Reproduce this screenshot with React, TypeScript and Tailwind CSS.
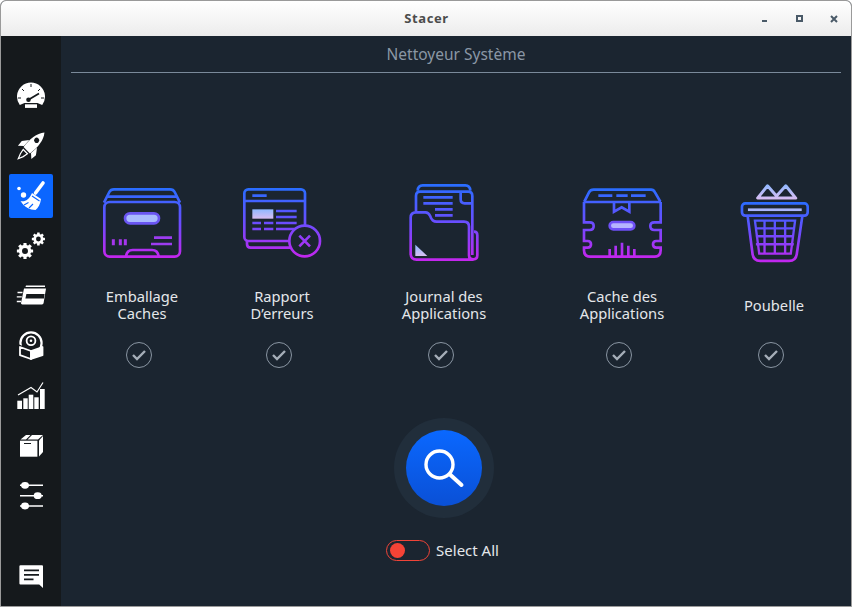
import React from "react";

const DARK = "#15191c";
const BG = "#1b2530";

function Grad({ id, y1, y2 }: { id: string; y1: number; y2: number }) {
  return (
    <linearGradient id={id} gradientUnits="userSpaceOnUse" x1="0" x2="0" y1={y1} y2={y2}>
      <stop offset="0" stopColor="#2a6dff" />
      <stop offset="0.5" stopColor="#6a4dff" />
      <stop offset="1" stopColor="#c426ee" />
    </linearGradient>
  );
}

function Light({ id, y1, y2 }: { id: string; y1: number; y2: number }) {
  return (
    <linearGradient id={id} gradientUnits="userSpaceOnUse" x1="0" x2="0" y1={y1} y2={y2}>
      <stop offset="0" stopColor="#8fb8ff" />
      <stop offset="1" stopColor="#d8bdf2" />
    </linearGradient>
  );
}

function IconCaches() {
  return (
    <svg width="85" height="75" viewBox="30 45 255 225" fill="none" stroke="url(#g1)" strokeWidth="8" strokeLinecap="butt">
      <defs>
        <Grad id="g1" y1={55} y2={262} />
      </defs>
      <path d="M42 98 L58 66 Q62 58 72 58 L240 58 Q250 58 254 66 L270 98" strokeLinejoin="round" />
      <path d="M52 80 L260 80" />
      <rect x="43" y="96" width="227" height="164" rx="16" />
      <rect x="105" y="130" width="102" height="30" rx="15" fill="#a9baff" stroke="#6a55f2" />
      <path d="M70 208 V226 M91 208 V226 M106 208 V226" stroke="#a636ee" strokeWidth="9" />
      <path d="M192 203 H246 M183 222 H246" stroke="#9c3cf0" />
      <path d="M108 260 Q110 240 128 240 L186 240 Q204 240 206 260" />
    </svg>
  );
}

function IconReport() {
  return (
    <svg width="84" height="75" viewBox="450 45 252 225" fill="none" stroke="url(#g2)" strokeWidth="8">
      <defs>
        <Grad id="g2" y1={55} y2={262} />
        <Light id="l2" y1={118} y2={146} />
      </defs>
      <rect x="463" y="58" width="182" height="155" rx="12" />
      <path d="M463 93 H645" />
      <path d="M487 77 H530" />
      <rect x="487" y="118" width="63" height="28" fill="url(#l2)" stroke="none" />
      <path d="M558 123 H620 M558 141 H620 M558 159 H620 M558 177 H620 M487 159 H513 M522 159 H550 M487 177 H513 M522 177 H550" />
      <path d="M471 213 V222 Q471 233 482 233 H610" />
      <circle cx="644" cy="213" r="46" fill={BG} />
      <path d="M628 197 L660 229 M660 197 L628 229" strokeWidth="8" />
    </svg>
  );
}

function IconJournal() {
  return (
    <svg width="80" height="75" viewBox="12 45 240 225" fill="none" stroke="url(#g3)" strokeWidth="8" className="overflow-visible">
      <defs>
        <Grad id="g3" y1={45} y2={272} />
        <Light id="l3" y1={224} y2={258} />
      </defs>
      <path d="M53 62 Q54 46 68 46 H196 Q210 46 211 62" />
      <path d="M48 125 V78 Q48 65 60 65 H205 Q217 65 217 78 V255" />
      <path d="M182 65 V88 Q182 100 194 100 H217" />
      <path d="M70 82 H158 M70 100 H158 M105 118 H158 M105 136 H158" />
      <path d="M32 250 V143 Q32 127 48 127 H76 Q86 127 91 139 Q96 155 110 155 H192 Q207 155 207 170 V256 Q207 268 220 268 Q232 268 232 256 V196 Q232 185 222 185 M32 250 Q32 269 50 269 H220" />
      <path d="M46 224 L82 258 H46 Z" fill="url(#l3)" stroke="none" />
    </svg>
  );
}

function IconAppCache() {
  return (
    <svg width="85" height="75" viewBox="15 30 255 225" fill="none" stroke="url(#g4)" strokeWidth="8">
      <defs>
        <Grad id="g4" y1={40} y2={248} />
      </defs>
      <path d="M28 80 L42 52 Q46 44 56 44 H228 Q236 44 240 52 L256 80" />
      <path d="M26 81 H258" />
      <path d="M70 62 H112 M124 62 H158 M168 62 H212" />
      <path d="M117 82 V110 L140 97 L163 110 V82" />
      <path d="M27 81 V142 H44 Q56 142 56 153 Q56 165 44 165 H27 V198 H38 Q48 198 48 208 Q48 218 38 218 H27 V226 Q27 245 46 245 H238 Q257 245 257 226 V218 H244 Q234 218 234 208 Q234 198 244 198 H257 V165 H238 Q226 165 226 153 Q226 142 238 142 H257 V81" />
      <rect x="104" y="141" width="74" height="22" rx="11" fill="#b6b4ff" stroke="#6f50f7" />
      <path d="M104 222 V245 M122 212 V245 M141 203 V245 M160 212 V245 M178 222 V245" />
    </svg>
  );
}

function IconTrash() {
  const cols = [566, 597, 628];
  const rows = [160, 184, 208];
  return (
    <svg width="83" height="75" viewBox="471 30 250 225" fill="none" stroke="url(#g5)" strokeWidth="8" className="overflow-visible">
      <defs>
        <Grad id="g5" y1={80} y2={262} />
        <Light id="l5" y1={28} y2={72} />
      </defs>
      <path d="M545 69 L575 32 L602 63 L630 32 L660 69 Z" stroke="url(#l5)" strokeWidth="9" strokeLinejoin="round" />
      <rect x="498" y="85" width="198" height="37" rx="10" />
      <rect x="516" y="100" width="162" height="8" fill="#a9b5fa" stroke="none" />
      <path d="M515 122 L530 238 Q533 258 553 258 H640 Q660 258 663 238 L680 122" />
      <path d="M537 137 H658 L645 236 H550 Z" strokeWidth="7" />
      {rows.map((y) => (
        <path key={y} d={`M540 ${y} H654`} strokeWidth="7" />
      ))}
      {cols.map((x) => (
        <path key={x} d={`M${x} 137 V236`} strokeWidth="7" />
      ))}
    </svg>
  );
}

function SideSvg({ children }: { children: React.ReactNode }) {
  return (
    <svg width="32" height="32" viewBox="0 0 32 32" fill="none">
      {children}
    </svg>
  );
}

function Gauge() {
  return (
    <SideSvg>
      <path d="M4.8 25 A14 14 0 1 1 27.2 25 L22.5 23 L9.5 23 Z" fill="white" />
      <rect x="10" y="24.3" width="12" height="3.6" fill="white" />
      <path d="M13 20 L24 13.5" stroke={DARK} strokeWidth="1.8" />
      <circle cx="13.5" cy="19.8" r="2.3" fill={DARK} />
      <path d="M16 4 V7 M7 9 L9 11 M25 9 L23 11 M3 18 H6 M26 18 H29" stroke={DARK} strokeWidth="1" />
    </SideSvg>
  );
}

function Rocket() {
  return (
    <SideSvg>
      <g transform="rotate(45 16 16)">
        <path d="M16 -3 C21 3 22 12 20.5 22 H11.5 C10 12 11 3 16 -3Z" fill="white" />
        <circle cx="16" cy="8" r="2.6" fill={DARK} />
        <path d="M10.5 13 L6 19 L6.5 25 L11 21Z M21.5 13 L26 19 L25.5 25 L21 21Z" fill="white" />
        <path d="M13 24 H19 L18 29 L16 34 L14 29 Z" stroke="white" strokeWidth="1.2" />
      </g>
    </SideSvg>
  );
}

function Broom() {
  return (
    <SideSvg>
      <path d="M28 3 L20.5 13" stroke="white" strokeWidth="3.6" strokeLinecap="round" />
      <path d="M17 13 L26 19 C25.5 24 23 28 20.5 30 C15 30 9 27 5.5 21 C10 22 14 20 17 13Z" fill="white" />
      <path d="M17 16 L24.5 21 M9 25 L13.5 22.5 M14 28 L18 24" stroke="#0b66ff" strokeWidth="1.1" />
      <circle cx="4" cy="8.5" r="1.8" fill="white" />
      <circle cx="8.5" cy="15" r="2.7" fill="white" />
    </SideSvg>
  );
}

function GearShape({ cx, cy, r, tooth }: { cx: number; cy: number; r: number; tooth: number }) {
  const a = [0, 45, 90, 135, 180, 225, 270, 315];
  return (
    <g>
      {a.map((d) => (
        <rect key={d} x={cx - tooth / 2} y={cy - r - tooth * 0.6} width={tooth} height={tooth} rx="0.4" fill="white" transform={`rotate(${d} ${cx} ${cy})`} />
      ))}
      <circle cx={cx} cy={cy} r={r} fill="white" />
      <circle cx={cx} cy={cy} r={r * 0.48} fill={DARK} />
    </g>
  );
}

function Gears() {
  return (
    <SideSvg>
      <GearShape cx={10} cy={21} r={6.2} tooth={3.2} />
      <GearShape cx={23.4} cy={9} r={5} tooth={2.6} />
    </SideSvg>
  );
}

function Startup() {
  return (
    <SideSvg>
      <path d="M11 5.5 L30 5.5 L30 7 L10.5 7Z" fill="white" />
      <path d="M9 8.5 L31 8.5 L28.6 23 Q28.4 24.4 27 24.4 L7.4 24.4 Q5.8 24.4 6 23Z" fill="white" />
      <path d="M11.4 14 L29.6 14 L29 18.4 L10.4 18.4Z" fill={DARK} />
      <path d="M2.5 12.5 H7.5 M1.8 16.8 H6.8 M1.8 21.5 H6" stroke="white" strokeWidth="1.3" />
    </SideSvg>
  );
}

function Disc() {
  return (
    <SideSvg>
      <circle cx="16" cy="13" r="10.6" stroke="white" strokeWidth="2.2" />
      <circle cx="16" cy="10.7" r="4.4" stroke="white" strokeWidth="1.8" />
      <circle cx="16" cy="10.7" r="1.3" fill="white" />
      <path d="M4 16.5 L16 21 V29.8 L4 25.8Z" stroke={DARK} strokeWidth="3.5" fill={DARK} />
      <path d="M5 17 L16 21 V29 L5 25.2Z" stroke="white" strokeWidth="1.8" strokeLinejoin="round" fill={DARK} />
      <path d="M16 21 L27.5 17 V25.2 L16 29Z" fill="white" stroke="white" strokeWidth="1.8" strokeLinejoin="round" />
    </SideSvg>
  );
}

function Chart() {
  return (
    <SideSvg>
      <rect x="2.3" y="20.7" width="4.7" height="8.3" fill="white" />
      <rect x="8.3" y="18.3" width="4.4" height="10.7" fill="white" />
      <rect x="13.7" y="14.7" width="4.6" height="14.3" fill="white" />
      <rect x="19.3" y="17.3" width="4.4" height="11.7" fill="white" />
      <rect x="25" y="9" width="4.7" height="20" fill="white" />
      <path d="M3 15 L16 7.5 L22 12 L28 2.5" stroke="white" strokeWidth="1.2" />
    </SideSvg>
  );
}

function Box() {
  return (
    <SideSvg>
      <rect x="5" y="10.7" width="17.4" height="16" fill="white" />
      <path d="M5.5 9.5 L11 5 H15.5 L11 9.5Z M12.5 9.5 L17 5 H28 L23 9.5Z" fill="white" />
      <path d="M24 10.5 L28 6 V22 L24 26.6Z" fill="white" />
      <path d="M9 13.5 H16" stroke={DARK} strokeWidth="1" />
    </SideSvg>
  );
}

function Sliders() {
  return (
    <SideSvg>
      <path d="M5 5.3 H28 M5 15.7 H28 M5 26 H28" stroke="white" strokeWidth="1.6" />
      <ellipse cx="10" cy="5.3" rx="4" ry="3.4" fill="white" />
      <ellipse cx="22.7" cy="15.7" rx="4" ry="3.4" fill="white" />
      <ellipse cx="10" cy="26" rx="4" ry="3.4" fill="white" />
    </SideSvg>
  );
}

function Chat() {
  return (
    <SideSvg>
      <path d="M5.5 5.3 H27 Q28 5.3 28 6.3 V28 L24.2 24.4 H5.5 Q4.4 24.4 4.4 23.4 V6.3 Q4.4 5.3 5.5 5.3Z" fill="white" />
      <path d="M9 10.3 H24 M9 14.8 H24 M9 19.3 H18.5" stroke={DARK} strokeWidth="1.8" />
    </SideSvg>
  );
}

function SideItem({ children, active }: { children: React.ReactNode; active?: boolean }) {
  return (
    <div className="h-[50px] flex items-center justify-center">
      <div className={active ? "w-[44px] h-[44px] rounded-[2px] bg-[#0b66ff] flex items-center justify-center" : "w-[44px] h-[44px] flex items-center justify-center"}>
        {children}
      </div>
    </div>
  );
}

function Check() {
  return (
    <div className="pr-[6px]">
      <div className="w-[26px] h-[26px] rounded-full border border-[#8a96a3] flex items-center justify-center">
        <svg width="16" height="12" viewBox="0 0 16 12" fill="none">
          <path d="M2 6 L6 10 L14 2" stroke="#a5aeb8" strokeWidth="2.4" />
        </svg>
      </div>
    </div>
  );
}

function Column({ width, icon, lines }: { width: string; icon: React.ReactNode; lines: string[] }) {
  return (
    <div className={`${width} flex flex-col items-center`}>
      <div className="h-[75px] flex items-center justify-center">{icon}</div>
      <div className="mt-[28px] h-[34px] flex flex-col justify-center items-center text-[14.7px] leading-[17px] text-[#e4e7ea] text-center whitespace-nowrap">
        {lines.map((l) => (
          <div key={l}>{l}</div>
        ))}
      </div>
      <div className="mt-[20px]">
        <Check />
      </div>
    </div>
  );
}

export default function App() {
  return (
    <div className="w-[852px] h-[607px] flex flex-col overflow-hidden bg-[#1b2530] border border-[#9a9a9a] rounded-t-[6px] font-['Noto_Sans',sans-serif]">
      <div className="h-[35px] shrink-0 flex items-center bg-gradient-to-b from-[#ffffff] to-[#ececec] relative">
        <div className="flex-1 text-center text-[13px] font-bold text-[#4c4c4c] tracking-[0.6px] pl-px">Stacer</div>
        <div className="absolute right-0 top-0 h-[35px] flex items-center">
          <div className="w-[5px] h-[2px] bg-[#4a5a68] mt-[5px] mr-[29px]" />
          <div className="w-[7px] h-[7px] border-2 border-[#4a5a68] mr-[27px]" />
          <svg width="8" height="8" viewBox="0 0 8 8" className="mr-[13px]">
            <path d="M1 1 L7 7 M7 1 L1 7" stroke="#4a5a68" strokeWidth="2" />
          </svg>
        </div>
      </div>
      <div className="flex-1 flex min-h-0">
        <div className="w-[60px] shrink-0 bg-[#15191c] flex flex-col pt-[35px] pb-[5px]">
          <SideItem><Gauge /></SideItem>
          <SideItem><Rocket /></SideItem>
          <SideItem active><Broom /></SideItem>
          <SideItem><Gears /></SideItem>
          <SideItem><Startup /></SideItem>
          <SideItem><Disc /></SideItem>
          <SideItem><Chart /></SideItem>
          <SideItem><Box /></SideItem>
          <SideItem><Sliders /></SideItem>
          <div className="mt-auto">
            <SideItem><Chat /></SideItem>
          </div>
        </div>
        <div className="flex-1 px-[10px] flex flex-col">
          <div className="h-[37px] shrink-0 border-b border-[#7b8a9a] flex items-center justify-center text-[15.5px] text-[#8a97a5] pt-[2px]">
            Nettoyeur Système
          </div>
          <div className="flex ml-px mt-[112px]">
            <Column width="w-[140px]" icon={<IconCaches />} lines={["Emballage", "Caches"]} />
            <Column width="w-[140px]" icon={<IconReport />} lines={["Rapport", "D’erreurs"]} />
            <Column width="w-[184px]" icon={<IconJournal />} lines={["Journal des", "Applications"]} />
            <Column width="w-[172px]" icon={<IconAppCache />} lines={["Cache des", "Applications"]} />
            <Column width="w-[132px]" icon={<IconTrash />} lines={["Poubelle"]} />
          </div>
          <div className="w-[184px] ml-[281px] mt-[50px] flex flex-col items-center">
            <div className="w-[100px] h-[100px] rounded-full bg-[#212e3b] flex items-center justify-center">
              <div className="w-[76px] h-[76px] rounded-full bg-gradient-to-b from-[#0a68ff] to-[#0a50d6] flex items-center justify-center">
                <svg width="44" height="44" viewBox="0 0 44 44" fill="none">
                  <circle cx="17.5" cy="18.5" r="13.5" stroke="white" strokeWidth="3.4" />
                  <path d="M28 28.5 L39.5 39" stroke="white" strokeWidth="4" strokeLinecap="round" />
                </svg>
              </div>
            </div>
            <div className="mt-[22px] h-[21px] flex items-center gap-[6px] pr-[3px] whitespace-nowrap">
              <div className="w-[44px] h-[21px] rounded-full border border-[#f04438] flex items-center pl-[3px]">
                <div className="w-[15px] h-[15px] rounded-full bg-[#f44336]" />
              </div>
              <span className="text-[15px] leading-[21px] text-[#e4e7ea]">Select All</span>
            </div>
          </div>
        </div>
      </div>
    </div>
  );
}
